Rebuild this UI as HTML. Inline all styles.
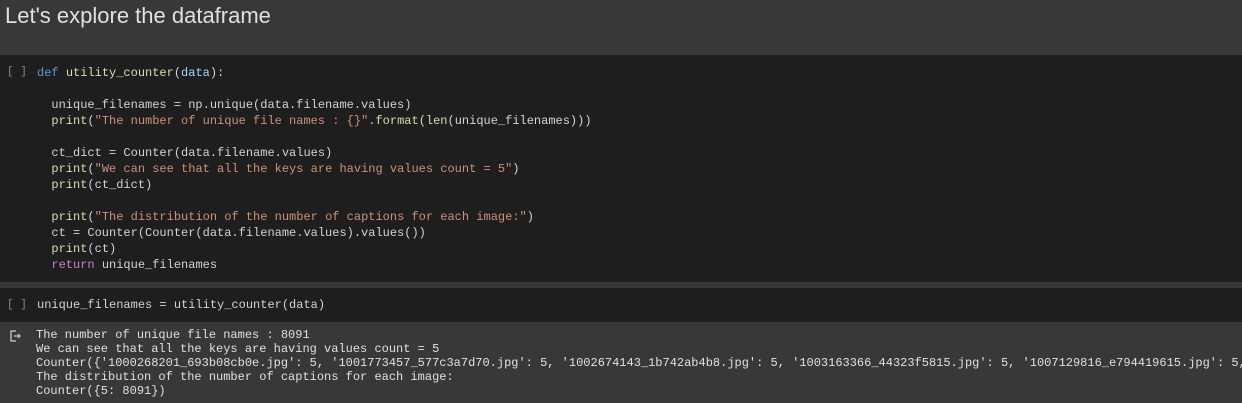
<!DOCTYPE html>
<html><head><style>
body{margin:0;width:1242px;height:403px;overflow:hidden;background:#383838;font-family:"Liberation Mono",monospace;font-size:12px;color:#d4d4d4;position:relative}
.title{position:absolute;left:5px;top:2px;font-family:"Liberation Sans",sans-serif;font-size:22px;color:#e0e0e0;line-height:28px}
.cell{position:absolute;left:0;width:1242px;background:#1e1e1e}
.br{position:absolute;left:7px;color:#8a8a8a;font-size:11px}
pre{margin:0;font-family:inherit;font-size:12px;line-height:16px;position:absolute;white-space:pre}
.k{color:#569cd6}.f{color:#dcdcaa}.s{color:#ce9178}.p{color:#9cdcfe}.r{color:#c586c0}
.clip{position:absolute;left:0;top:322px;width:1242px;height:81px;overflow:hidden}
.out{position:absolute;left:36px;top:6px;line-height:14px;color:#e0e0e0}
</style></head><body>
<div class="title">Let's explore the dataframe</div>
<div class="cell" style="top:55px;height:227px">
<div class="br" style="top:11px">[ ]</div>
<pre style="left:37px;top:10px"><span class="k">def</span> <span class="f">utility_counter</span>(<span class="p">data</span>):

  unique_filenames = np.unique(data.filename.values)
  <span class="f">print</span>(<span class="s">"The number of unique file names : {}"</span>.<span class="f">format</span>(<span class="f">len</span>(unique_filenames)))

  ct_dict = Counter(data.filename.values)
  <span class="f">print</span>(<span class="s">"We can see that all the keys are having values count = 5"</span>)
  <span class="f">print</span>(ct_dict)

  <span class="f">print</span>(<span class="s">"The distribution of the number of captions for each image:"</span>)
  ct = Counter(Counter(data.filename.values).values())
  <span class="f">print</span>(ct)
  <span class="r">return</span> unique_filenames</pre>
</div>
<div class="cell" style="top:288px;height:34px">
<div class="br" style="top:11px">[ ]</div>
<pre style="left:37px;top:9px">unique_filenames = utility_counter(data)</pre>
</div>
<svg style="position:absolute;left:10px;top:330px" width="12" height="12" viewBox="0 0 12 12"><path d="M6 1H1v10h5" fill="none" stroke="#ccc" stroke-width="1.3"/><path d="M4 6h6M8 4l2 2-2 2" fill="none" stroke="#ccc" stroke-width="1.2"/></svg>
<div class="clip"><pre class="out">The number of unique file names : 8091
We can see that all the keys are having values count = 5
Counter({'1000268201_693b08cb0e.jpg': 5, '1001773457_577c3a7d70.jpg': 5, '1002674143_1b742ab4b8.jpg': 5, '1003163366_44323f5815.jpg': 5, '1007129816_e794419615.jpg': 5, '1007320043_627395c3d8.jpg': 5})
The distribution of the number of captions for each image:
Counter({5: 8091})</pre></div>
</body></html>
